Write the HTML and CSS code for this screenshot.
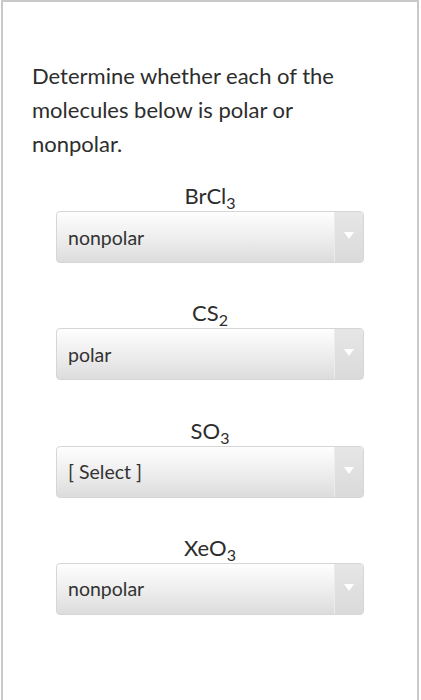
FILE: index.html
```html
<!DOCTYPE html>
<html>
<head>
<meta charset="utf-8">
<link rel="stylesheet" href="styles.css">
</head>
<body>
<div class="frame">
  <p class="prompt">Determine whether each of the molecules below is polar or nonpolar.</p>
  <div class="questions">
    <div class="q">
      <div class="label">BrCl<sub>3</sub></div>
      <div class="select"><span class="value">nonpolar</span><span class="arrow"></span></div>
    </div>
    <div class="q">
      <div class="label">CS<sub>2</sub></div>
      <div class="select"><span class="value">polar</span><span class="arrow"></span></div>
    </div>
    <div class="q">
      <div class="label">SO<sub>3</sub></div>
      <div class="select"><span class="value">[ Select ]</span><span class="arrow"></span></div>
    </div>
    <div class="q">
      <div class="label">XeO<sub>3</sub></div>
      <div class="select"><span class="value">nonpolar</span><span class="arrow"></span></div>
    </div>
  </div>
</div>
</body>
</html>
```
FILE: styles.css
```css
html, body {
  margin: 0;
  padding: 0;
  background: #fff;
}
body {
  font-family: Lato, "Open Sans", sans-serif;
  color: #2d2d2d;
}
.frame {
  box-sizing: border-box;
  margin-left: 1px;
  width: 418px;
  height: 720px;
  border: 2px solid #c9c9c9;
  border-bottom: none;
  padding: 57px 0 0 29px;
}
.prompt {
  margin: 0;
  width: 320px;
  font-size: 22px;
  line-height: 34px;
}
.questions {
  width: 308px;
  margin-left: 24px;
  margin-top: 23px;
  display: flex;
  flex-direction: column;
  gap: 38.3px;
}
.q {
  display: flex;
  flex-direction: column;
  gap: 3px;
}
.label {
  text-align: center;
  font-size: 22px;
  line-height: 24px;
  height: 24px;
}
.label sub {
  font-size: 16px;
  vertical-align: -5px;
  line-height: 0;
}
.select {
  box-sizing: border-box;
  height: 52px;
  display: flex;
  align-items: center;
  border: 1px solid #d6d6d6;
  border-radius: 4px;
  background: linear-gradient(#fefefe, #ebebeb 60%, #dcdcdc);
  overflow: hidden;
}
.value {
  flex: 1;
  padding-left: 11px;
  font-size: 19.5px;
  color: #333;
}
.arrow {
  align-self: stretch;
  width: 28px;
  background: linear-gradient(#e6e6e6, #dadada);
  border-left: 1px solid #ececec;
  position: relative;
}
.arrow::after {
  content: "";
  position: absolute;
  left: 9px;
  top: 20px;
  border-left: 5px solid transparent;
  border-right: 5px solid transparent;
  border-top: 7px solid #fff;
}
```
